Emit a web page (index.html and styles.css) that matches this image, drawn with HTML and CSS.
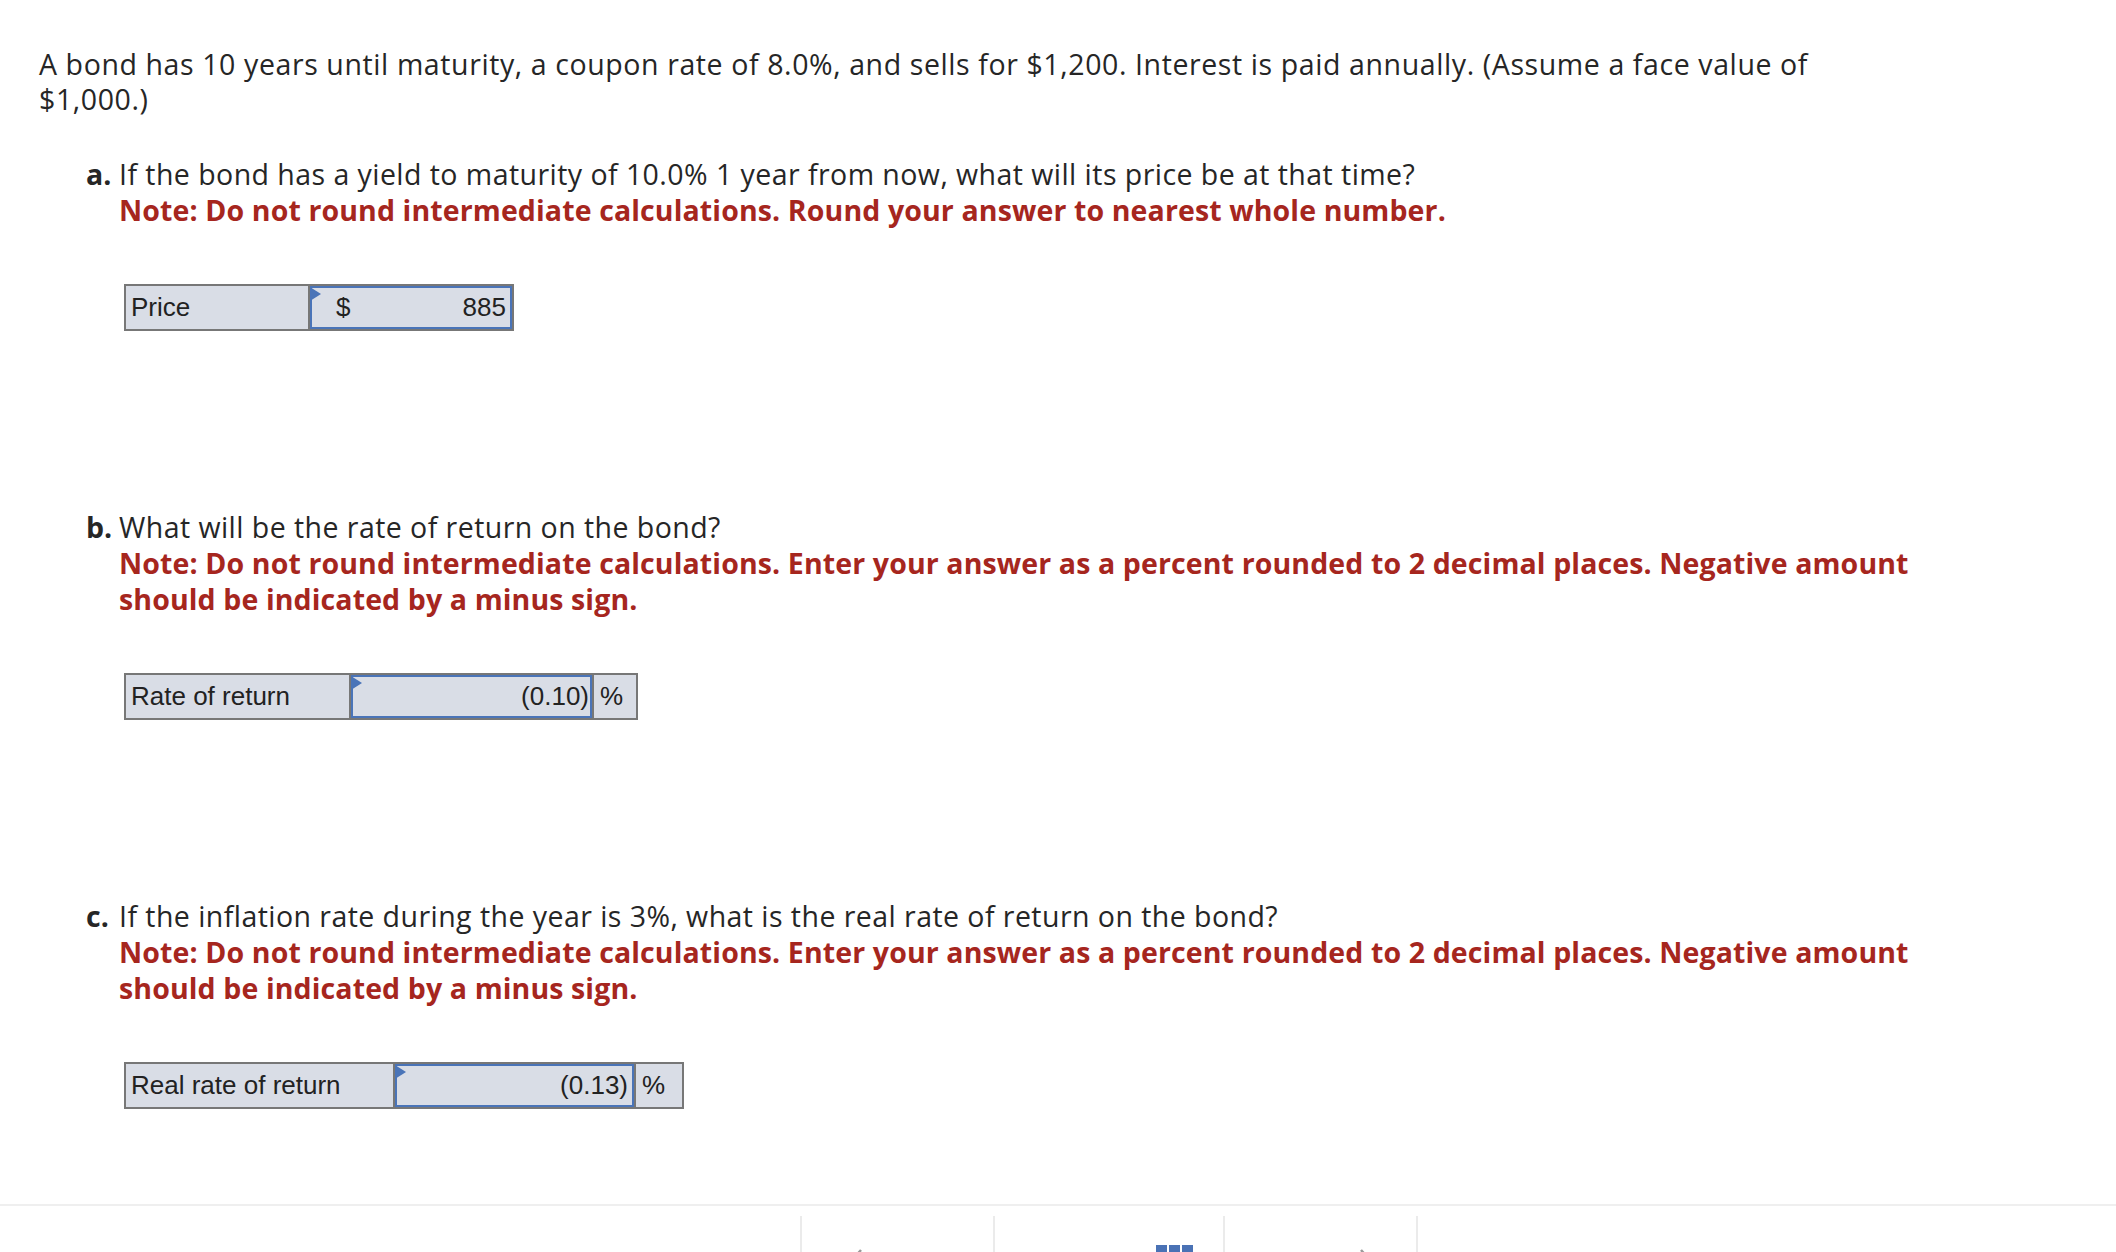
FILE: index.html
```html
<!DOCTYPE html>
<html lang="en">
<head>
<meta charset="utf-8">
<title>Bond question</title>
<link rel="stylesheet" href="styles.css">
</head>
<body>
<main class="question">
  <p class="intro">A bond has 10 years until maturity, a coupon rate of 8.0%, and sells for $1,200. Interest is paid annually. (Assume a face value of<br>$1,000.)</p>

  <section class="part part-a">
    <div class="part-head">
      <span class="part-letter">a.</span>
      <div class="part-text">
        <p class="prompt">If the bond has a yield to maturity of 10.0% 1 year from now, what will its price be at that time?</p>
        <p class="note">Note: Do not round intermediate calculations. Round your answer to nearest whole number.</p>
      </div>
    </div>
    <div class="answer-table">
      <div class="label label-price">Price</div>
      <div class="input input-price"><span class="flag"></span><span class="currency">$</span><span class="value value-price">885</span></div>
    </div>
  </section>

  <section class="part part-b">
    <div class="part-head">
      <span class="part-letter">b.</span>
      <div class="part-text">
        <p class="prompt">What will be the rate of return on the bond?</p>
        <p class="note">Note: Do not round intermediate calculations. Enter your answer as a percent rounded to 2 decimal places. Negative amount<br>should be indicated by a minus sign.</p>
      </div>
    </div>
    <div class="answer-table">
      <div class="label label-rate">Rate of return</div>
      <div class="input input-pct input-rate"><span class="flag"></span><span class="value value-pct">(0.10)</span></div>
      <div class="unit unit-b">%</div>
    </div>
  </section>

  <section class="part part-c">
    <div class="part-head">
      <span class="part-letter">c.</span>
      <div class="part-text">
        <p class="prompt">If the inflation rate during the year is 3%, what is the real rate of return on the bond?</p>
        <p class="note">Note: Do not round intermediate calculations. Enter your answer as a percent rounded to 2 decimal places. Negative amount<br>should be indicated by a minus sign.</p>
      </div>
    </div>
    <div class="answer-table">
      <div class="label label-real">Real rate of return</div>
      <div class="input input-pct input-real"><span class="flag"></span><span class="value value-pct">(0.13)</span></div>
      <div class="unit unit-c">%</div>
    </div>
  </section>
</main>

<footer class="footer">
  <nav class="footer-nav">
    <div class="seg seg-prev">
      <svg class="chev" width="14" height="20" viewBox="0 0 14 20"><path d="M11 1 L3 10 L11 19" fill="none" stroke="#9a9a9a" stroke-width="2.5"/></svg>
    </div>
    <div class="seg seg-mid">
      <div class="grid-icon"><span></span><span></span><span></span></div>
    </div>
    <div class="seg seg-next">
      <svg class="chev" width="14" height="20" viewBox="0 0 14 20"><path d="M3 1 L11 10 L3 19" fill="none" stroke="#9a9a9a" stroke-width="2.5"/></svg>
    </div>
  </nav>
</footer>
</body>
</html>
```

FILE: styles.css
```css
html, body {
  margin: 0;
  padding: 0;
  overflow: hidden;
  background: #ffffff;
}

body {
  width: 2116px;
  height: 1252px;
  font-family: "Open Sans", "DejaVu Sans", sans-serif;
  color: #262626;
}

.question {
  padding: 47px 0 0 39px;
}

.intro {
  margin: 0;
  font-size: 28.5px;
  line-height: 35px;
  letter-spacing: 0.6px;
  white-space: nowrap;
}

.part {
  padding-left: 47px;
  margin-top: 178px;
}

.part-a {
  margin-top: 39px;
}

.part-head {
  display: grid;
  grid-template-columns: 33px auto;
  font-size: 28.5px;
  line-height: 36px;
}

.part-letter {
  font-weight: 700;
}

.prompt,
.note {
  margin: 0;
  white-space: nowrap;
}

.prompt {
  letter-spacing: 0.45px;
}

.note {
  color: #a6261e;
  font-weight: 700;
  letter-spacing: 0.12px;
}

/* answer tables */
.answer-table {
  display: inline-flex;
  margin: 56px 0 0 38px;
  height: 47px;
  box-sizing: border-box;
  border: 2px solid #777777;
  background: #d9dde6;
  font-family: "Liberation Sans", Arial, sans-serif;
  font-size: 26px;
  color: #222222;
}

.label {
  display: flex;
  align-items: center;
  box-sizing: border-box;
  padding-left: 5px;
  border-right: 2px solid #777777;
}

.label-price { width: 184px; }
.label-rate { width: 225px; }
.label-real { width: 269px; }

.input {
  position: relative;
  display: flex;
  align-items: center;
  justify-content: space-between;
  box-sizing: border-box;
  border: 2px solid #4a74b8;
}

.input-price {
  width: 202px;
  padding: 0 4px 0 24px;
}

.input-pct {
  justify-content: flex-end;
}

.input-rate {
  width: 241px;
  padding-right: 1px;
}

.input-real {
  width: 239px;
  padding-right: 4px;
}

.flag {
  position: absolute;
  left: -2px;
  top: -1px;
  width: 0;
  height: 0;
  border-top: 7px solid transparent;
  border-bottom: 7px solid transparent;
  border-left: 11px solid #4a74b8;
}

.unit {
  display: flex;
  align-items: center;
  box-sizing: border-box;
  padding-left: 6px;
  border-left: 2px solid #777777;
}

.unit-b { width: 44px; }
.unit-c { width: 48px; }

/* footer */
.footer {
  margin-top: 95px;
  border-top: 2px solid #efefef;
}

.footer-nav {
  display: flex;
  margin-left: 800px;
  padding-top: 10px;
}

.seg {
  box-sizing: border-box;
  height: 60px;
  border-left: 2px solid #ebebeb;
}

.seg-prev {
  width: 193px;
  padding: 33px 0 0 48px;
}

.seg-mid {
  width: 230px;
  padding: 29px 0 0 161px;
}

.seg-next {
  width: 195px;
  padding: 33px 0 0 133px;
  border-right: 2px solid #ebebeb;
}

.chev {
  display: block;
}

.grid-icon {
  display: flex;
  gap: 2px;
}

.grid-icon span {
  width: 11px;
  height: 11px;
  background: #4a72b5;
}
```
